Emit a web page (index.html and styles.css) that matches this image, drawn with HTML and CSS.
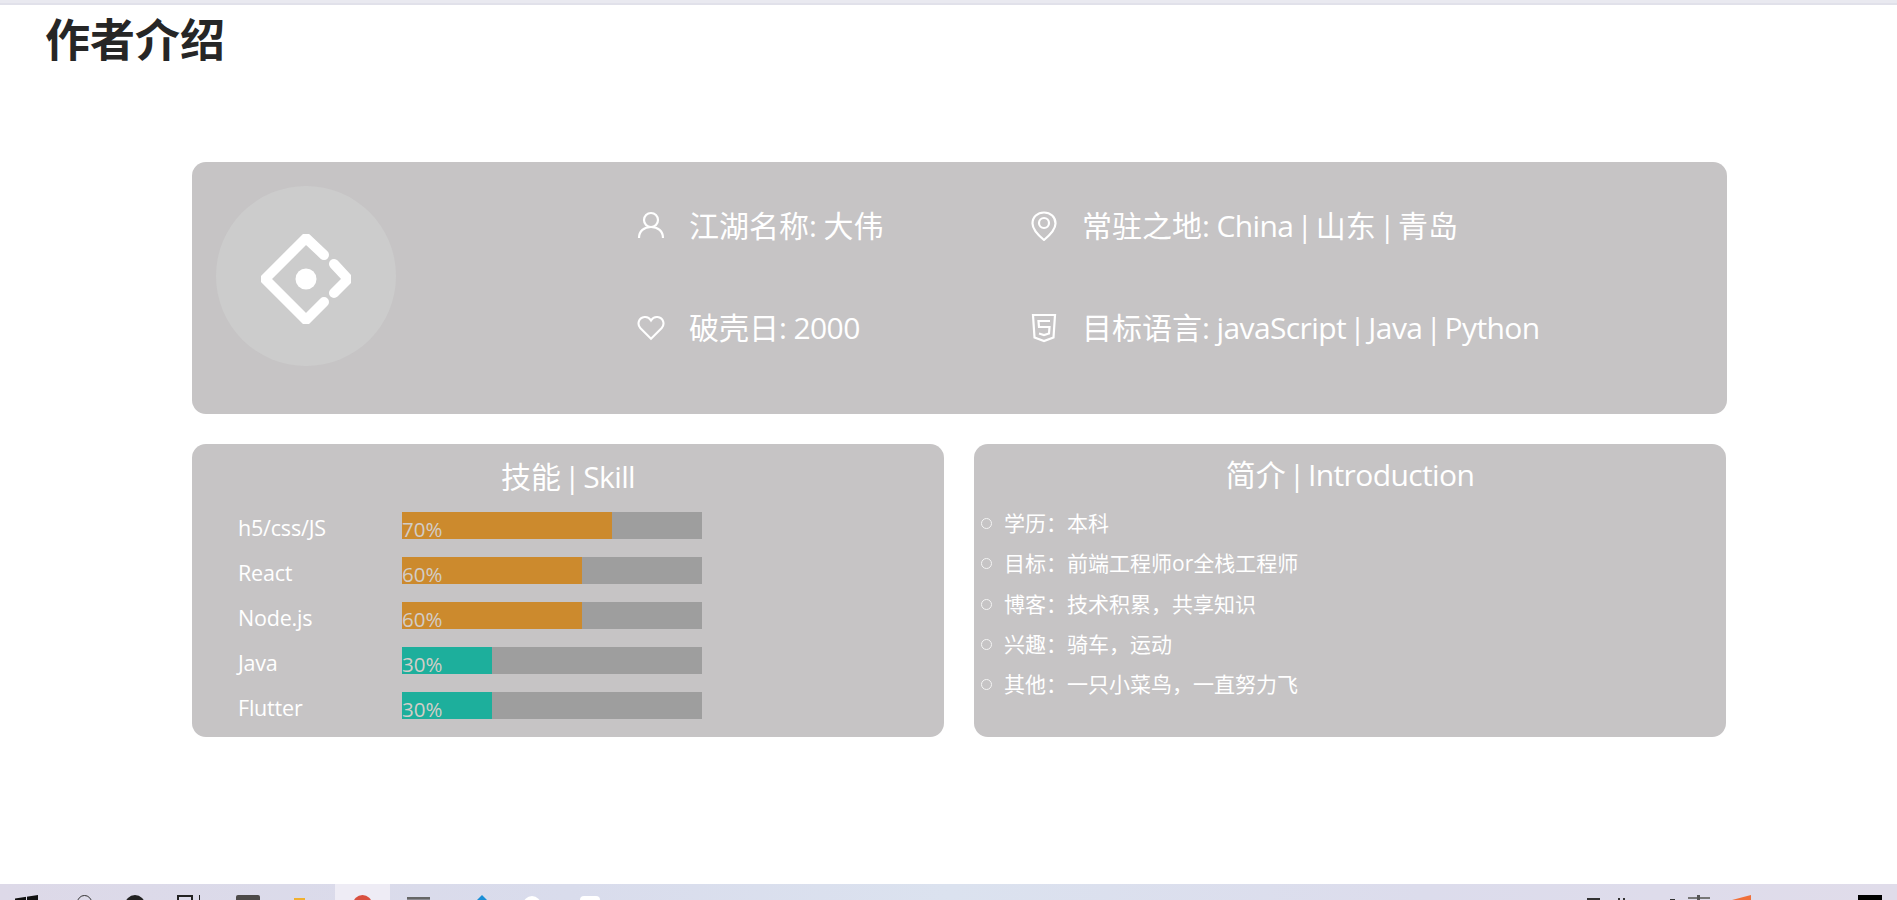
FILE: index.html
```html
<!DOCTYPE html>
<html lang="zh-CN">
<head>
<meta charset="utf-8">
<title>作者介绍</title>
<link rel="stylesheet" href="styles.css">
</head>
<body>
<div class="top-strip"></div>
<h1 class="page-title">作者介绍</h1>
<main class="content">
  <section class="card profile">
    <div class="avatar">
      <svg class="logo" viewBox="0 0 90 90" width="90" height="90">
        <path class="logo-stroke" d="M63 21 L45 4 L4 45 L45 86 L63 68"/>
        <path class="logo-stroke" d="M73 30 L87 45 L73 59"/>
        <circle class="logo-dot" cx="45" cy="45" r="10.500"/>
      </svg>
    </div>
    <div class="facts">
      <div class="fact">
        <svg class="fact-icon" viewBox="0 0 28 30"><circle cx="14" cy="9" r="7"/><path d="M2 27 C2 20 7 16 14 16 C21 16 26 20 26 27"/></svg>
        <span>江湖名称<span class="colon">: </span>大伟</span>
      </div>
      <div class="fact">
        <svg class="fact-icon" viewBox="0 0 28 30"><path d="M14 29 C8 24 2.500 18.500 2.500 12.500 C2.500 6 7.500 1.500 14 1.500 C20.500 1.500 25.500 6 25.500 12.500 C25.500 18.500 20 24 14 29 Z"/><circle cx="14" cy="12" r="5"/></svg>
        <span>常驻之地<span class="colon">: </span><span class="latin">China | </span>山东<span class="latin"> | </span>青岛</span>
      </div>
      <div class="fact">
        <svg class="fact-icon" viewBox="0 0 30 28"><path d="M15 25.500 L3.500 14 C0 10 1.500 3 8 2.200 C11 1.800 13.500 3.500 15 6 C16.500 3.500 19 1.800 22 2.200 C28.500 3 30 10 26.500 14 Z"/></svg>
        <span>破壳日<span class="colon">: 2000</span></span>
      </div>
      <div class="fact">
        <svg class="fact-icon" viewBox="0 0 28 30"><path d="M3 2 H25 L23.500 24.500 L14 28 L4.500 24.500 Z"/><path d="M20 8 H8.500 L9 14 H19.500 L19 20.500 L14 22 L9 20.500"/></svg>
        <span>目标语言<span class="colon">: </span><span class="latin">javaScript | Java | Python</span></span>
      </div>
    </div>
  </section>
  <div class="columns">
    <section class="card skills">
      <h2 class="card-title">技能<span class="latin"> | Skill</span></h2>
      <div class="skill-row"><span class="skill-name">h5/css/JS</span><div class="bar"><div class="fill warm" style="width:70%">70%</div></div></div>
      <div class="skill-row"><span class="skill-name">React</span><div class="bar"><div class="fill warm" style="width:60%">60%</div></div></div>
      <div class="skill-row"><span class="skill-name">Node.js</span><div class="bar"><div class="fill warm" style="width:60%">60%</div></div></div>
      <div class="skill-row"><span class="skill-name">Java</span><div class="bar"><div class="fill cool" style="width:30%">30%</div></div></div>
      <div class="skill-row"><span class="skill-name">Flutter</span><div class="bar"><div class="fill cool" style="width:30%">30%</div></div></div>
    </section>
    <section class="card intro">
      <h2 class="card-title">简介<span class="latin"> | Introduction</span></h2>
      <ul class="intro-list">
        <li>学历：本科</li>
        <li>目标：前端工程师or全栈工程师</li>
        <li>博客：技术积累，共享知识</li>
        <li>兴趣：骑车，运动</li>
        <li>其他：一只小菜鸟，一直努力飞</li>
      </ul>
    </section>
  </div>
</main>
<footer class="taskbar">
  <div class="task-group">
    <span class="t t-win"></span>
    <span class="t t-search"></span>
    <span class="t t-cortana"></span>
    <span class="t t-view"></span>
    <span class="t t-line"></span>
    <span class="t t-dark"></span>
    <span class="t t-yellow"></span>
    <span class="t-active"><span class="t t-red"></span></span>
    <span class="t t-grey"></span>
    <span class="t t-blue"></span>
    <span class="t t-white"></span>
    <span class="t t-white2"></span>
  </div>
  <div class="task-group">
    <span class="t t-mark-a"></span>
    <span class="t t-mark-b"></span>
    <span class="t t-mark-c"></span>
    <span class="t t-tray"></span>
    <span class="t t-orange"></span>
    <span class="t t-black"></span>
  </div>
</footer>
</body>
</html>
```
FILE: styles.css
```css
* { box-sizing: border-box; }
html, body { margin: 0; height: 900px; overflow: hidden; background: #fff; }
body {
  display: flex;
  flex-direction: column;
  font-family: "Open Sans", "Noto Sans CJK SC", sans-serif;
  font-weight: 400;
  color: #fff;
}
.colon { letter-spacing: -0.6px; }
.latin { letter-spacing: -0.6px; word-spacing: -4px; }
.top-strip { height: 5px; background: #e1e1ea; border-top: 3px solid #e9e9f0; flex: none; }
.page-title {
  margin: 0;
  padding: 3px 0 0 45px;
  height: 63px;
  font-family: "Noto Sans CJK SC", sans-serif;
  font-size: 45px;
  line-height: 60px;
  font-weight: 700;
  color: #262626;
  flex: none;
}
.content { margin: 94px 0 0 192px; width: 1535px; flex: 1; }
.card { background: #c6c4c5; border-radius: 14px; }
.profile { height: 252px; padding: 24px; display: flex; }
.avatar {
  width: 180px; height: 180px; border-radius: 50%;
  background: #cccccc;
  display: flex; align-items: center; justify-content: center;
  flex: none;
}
.logo { margin-top: 6px; }
.logo-stroke { fill: none; stroke: #fff; stroke-width: 10; stroke-linecap: round; stroke-linejoin: round; }
.logo-dot { fill: #fff; }
.facts {
  margin: 15px 0 0 241px;
  display: grid;
  grid-template-columns: 393px 1fr;
  grid-auto-rows: 102px;
  align-content: start;
}
.fact { display: flex; align-items: center; font-size: 30px; line-height: 40px; height: 50px; }
.fact-icon {
  width: 28px; height: 30px; margin-right: 24px; flex: none;
  fill: none; stroke: #fff; stroke-width: 2.200;
}
.columns { margin-top: 30px; display: grid; grid-template-columns: 752px 752px; column-gap: 30px; }
.skills, .intro { height: 293px; }
.card-title { margin: 0; font-size: 30px; font-weight: 400; line-height: 40px; text-align: center; }
.skills { padding-top: 13px; }
.intro { padding-top: 11px; }
.skill-row { display: flex; align-items: center; height: 27px; margin-bottom: 18px; padding-left: 46px; }
.skills .card-title { margin-bottom: 15px; }
.skill-name { width: 164px; margin-top: 4px; font-size: 21.500px; letter-spacing: -0.2px; flex: none; }
.bar { width: 300px; height: 27px; background: #9e9e9e; }
.fill { height: 27px; font-size: 20.500px; line-height: 34px; color: #d2cdc8; white-space: nowrap; }
.warm { background: #cc8a2d; }
.cool { background: #1daf9c; }
.intro-list { margin: 8px 0 0; padding: 0 0 0 30px; list-style: none; font-size: 21px; }
.intro-list li { position: relative; height: 40.300px; line-height: 40px; }
.intro-list li::before {
  content: ""; position: absolute; left: -23px; top: 15px;
  width: 9px; height: 9px; border: 1px solid #f4f4f4; border-radius: 50%;
}
.taskbar {
  flex: none; height: 16px; overflow: hidden;
  display: flex; justify-content: space-between;
  background: linear-gradient(90deg, #ddd9e8, #d9dcec 30%, #dbe2ef 50%, #dcdcec 75%, #e0dcea);
}
.task-group { display: flex; height: 16px; }
.t { display: block; flex: none; }
.t-win { width: 23px; height: 14px; margin: 11px 0 0 15px; background: linear-gradient(90deg, #111 47%, transparent 47%, transparent 53%, #111 53%); clip-path: polygon(0 25%, 100% 0, 100% 100%, 0 100%); }
.t-search { width: 15px; height: 15px; margin: 11px 0 0 39px; border: 1.500px solid #333; border-radius: 50%; }
.t-cortana { width: 20px; height: 20px; margin: 11px 0 0 33px; border: 5px solid #222; border-radius: 50%; }
.t-view { width: 16px; height: 12px; margin: 11px 0 0 32px; border: 2px solid #222; border-bottom: 0; }
.t-line { width: 1px; height: 12px; margin: 11px 0 0 6px; background: #222; }
.t-dark { width: 24px; height: 14px; margin: 11px 0 0 36px; background: #4d4a49; border-radius: 2px 2px 0 0; }
.t-yellow { width: 11px; height: 6px; margin: 14px 0 0 34px; background: #f0b030; }
.t-active { display: block; flex: none; width: 55px; height: 16px; margin-left: 30px; background: #eeecf5; padding: 11px 0 0 18px; }
.t-red { width: 19px; height: 19px; background: #d9503f; border-radius: 50%; }
.t-grey { width: 23px; height: 6px; margin: 13px 0 0 17px; background: #8a8a90; border-top: 2px solid #666; }
.t-blue { width: 12px; height: 12px; margin: 11px 0 0 46px; background: #1c8fd6; clip-path: polygon(50% 0, 100% 50%, 100% 100%, 0 100%, 0 50%); }
.t-white { width: 18px; height: 18px; margin: 12px 0 0 35px; background: #fff; border-radius: 50%; }
.t-white2 { width: 20px; height: 12px; margin: 12px 0 0 39px; background: #fff; border-radius: 4px 4px 0 0; }
.t-mark-a { width: 13px; height: 2px; margin-top: 14px; background: #333; }
.t-mark-b { width: 7px; height: 2px; margin: 14px 0 0 18px; border-left: 2px solid #333; border-right: 2px solid #333; }
.t-mark-c { width: 5px; height: 1px; margin: 15px 0 0 45px; background: #333; }
.t-tray { width: 22px; height: 5px; margin: 11px 0 0 13px; background: linear-gradient(90deg, transparent 42%, #555 42%, #555 54%, transparent 54%), linear-gradient(#777, #777) 0 2px / 100% 2px no-repeat; }
.t-orange { width: 19px; height: 10px; margin: 11px 0 0 22px; background: #f0703a; clip-path: polygon(0 50%, 100% 0, 100% 100%, 0 100%); }
.t-black { width: 24px; height: 14px; margin: 11px 15px 0 107px; background: #000; }
```
